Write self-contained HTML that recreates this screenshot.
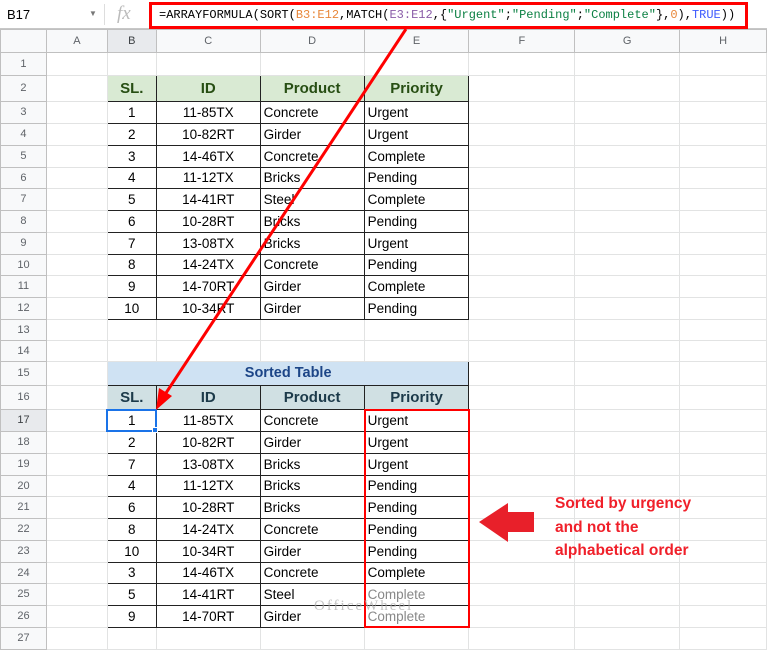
<!DOCTYPE html>
<html><head><meta charset="utf-8"><style>
*{margin:0;padding:0;box-sizing:border-box}
body{width:767px;height:646px;overflow:hidden;background:#fff;font-family:"Liberation Sans",Arial,sans-serif;position:relative}
#fb{position:absolute;left:0;top:0;width:767px;height:29px;border-bottom:1px solid #c7c7c7;background:#fff}
table{position:absolute;left:0;top:29px;border-collapse:collapse;table-layout:fixed}
td{border:1px solid #e2e3e3;font-size:13.5px;color:#000;white-space:nowrap;overflow:hidden;padding:0 3px;line-height:1}
td.h{background:#f8f9fa;color:#5f6368;font-size:11px;text-align:center;border-color:#c0c0c0}
td.hs{background:#e8eaed;color:#3c4043}
td.d{border:1px solid #222}
td.c{text-align:center}
td.gh{background:#d9ead3;color:#274e13;font-weight:bold;font-size:15px;text-align:center;border:1px solid #222}
td.bh{background:#d0e0e3;color:#1c3a4a;font-weight:bold;font-size:15px;text-align:center;border:1px solid #222}
td.bt{background:#cfe2f3;color:#1c4587;font-weight:bold;font-size:14.5px;text-align:center;border:1px solid #222}
</style></head><body>
<div id="fb">
 <div style="position:absolute;left:7px;top:7px;font-size:13px;color:#000">B17</div>
 <div style="position:absolute;left:89px;top:9px;font-size:8px;color:#777">▼</div>
 <div style="position:absolute;left:104px;top:4px;width:1px;height:21px;background:#ddd"></div>
 <div style="position:absolute;left:117px;top:3px;font-family:'Liberation Serif',serif;font-style:italic;font-size:19px;color:#bbb">fx</div>
 <div style="position:absolute;left:149px;top:2px;width:599px;height:27px;border:3px solid #f00"></div>
 <div style="position:absolute;left:159px;top:8px;font-family:'Liberation Mono',monospace;font-size:12px;color:#000">=ARRAYFORMULA(SORT(<span style="color:#e8873a">B3:E12</span>,MATCH(<span style="color:#8a5ca8">E3:E12</span>,{<span style="color:#0b8043">"Urgent"</span>;<span style="color:#0b8043">"Pending"</span>;<span style="color:#0b8043">"Complete"</span>},<span style="color:#e8873a">0</span>),<span style="color:#3d5afe">TRUE</span>))</div>
</div>
<table>
<colgroup><col style="width:46px"><col style="width:61px"><col style="width:49px"><col style="width:104px"><col style="width:104px"><col style="width:105px"><col style="width:106px"><col style="width:105px"><col style="width:87px"></colgroup>
<tr style="height:23px"><td class="h"></td><td class="h">A</td><td class="h hs">B</td><td class="h">C</td><td class="h">D</td><td class="h">E</td><td class="h">F</td><td class="h">G</td><td class="h">H</td></tr>
<tr style="height:23px"><td class="h">1</td><td></td><td></td><td></td><td></td><td></td><td></td><td></td><td></td></tr>
<tr style="height:26px"><td class="h">2</td><td></td><td class="gh">SL.</td><td class="gh">ID</td><td class="gh">Product</td><td class="gh">Priority</td><td></td><td></td><td></td></tr>
<tr style="height:22px"><td class="h">3</td><td></td><td class="d c">1</td><td class="d c">11-85TX</td><td class="d">Concrete</td><td class="d">Urgent</td><td></td><td></td><td></td></tr>
<tr style="height:22px"><td class="h">4</td><td></td><td class="d c">2</td><td class="d c">10-82RT</td><td class="d">Girder</td><td class="d">Urgent</td><td></td><td></td><td></td></tr>
<tr style="height:22px"><td class="h">5</td><td></td><td class="d c">3</td><td class="d c">14-46TX</td><td class="d">Concrete</td><td class="d">Complete</td><td></td><td></td><td></td></tr>
<tr style="height:21px"><td class="h">6</td><td></td><td class="d c">4</td><td class="d c">11-12TX</td><td class="d">Bricks</td><td class="d">Pending</td><td></td><td></td><td></td></tr>
<tr style="height:22px"><td class="h">7</td><td></td><td class="d c">5</td><td class="d c">14-41RT</td><td class="d">Steel</td><td class="d">Complete</td><td></td><td></td><td></td></tr>
<tr style="height:22px"><td class="h">8</td><td></td><td class="d c">6</td><td class="d c">10-28RT</td><td class="d">Bricks</td><td class="d">Pending</td><td></td><td></td><td></td></tr>
<tr style="height:22px"><td class="h">9</td><td></td><td class="d c">7</td><td class="d c">13-08TX</td><td class="d">Bricks</td><td class="d">Urgent</td><td></td><td></td><td></td></tr>
<tr style="height:21px"><td class="h">10</td><td></td><td class="d c">8</td><td class="d c">14-24TX</td><td class="d">Concrete</td><td class="d">Pending</td><td></td><td></td><td></td></tr>
<tr style="height:22px"><td class="h">11</td><td></td><td class="d c">9</td><td class="d c">14-70RT</td><td class="d">Girder</td><td class="d">Complete</td><td></td><td></td><td></td></tr>
<tr style="height:22px"><td class="h">12</td><td></td><td class="d c">10</td><td class="d c">10-34RT</td><td class="d">Girder</td><td class="d">Pending</td><td></td><td></td><td></td></tr>
<tr style="height:21px"><td class="h">13</td><td></td><td></td><td></td><td></td><td></td><td></td><td></td><td></td></tr>
<tr style="height:21px"><td class="h">14</td><td></td><td></td><td></td><td></td><td></td><td></td><td></td><td></td></tr>
<tr style="height:24px"><td class="h">15</td><td></td><td class="bt" colspan="4">Sorted Table</td><td></td><td></td><td></td></tr>
<tr style="height:24px"><td class="h">16</td><td></td><td class="bh">SL.</td><td class="bh">ID</td><td class="bh">Product</td><td class="bh">Priority</td><td></td><td></td><td></td></tr>
<tr style="height:22px"><td class="h hs">17</td><td></td><td class="d c">1</td><td class="d c">11-85TX</td><td class="d">Concrete</td><td class="d">Urgent</td><td></td><td></td><td></td></tr>
<tr style="height:22px"><td class="h">18</td><td></td><td class="d c">2</td><td class="d c">10-82RT</td><td class="d">Girder</td><td class="d">Urgent</td><td></td><td></td><td></td></tr>
<tr style="height:22px"><td class="h">19</td><td></td><td class="d c">7</td><td class="d c">13-08TX</td><td class="d">Bricks</td><td class="d">Urgent</td><td></td><td></td><td></td></tr>
<tr style="height:21px"><td class="h">20</td><td></td><td class="d c">4</td><td class="d c">11-12TX</td><td class="d">Bricks</td><td class="d">Pending</td><td></td><td></td><td></td></tr>
<tr style="height:22px"><td class="h">21</td><td></td><td class="d c">6</td><td class="d c">10-28RT</td><td class="d">Bricks</td><td class="d">Pending</td><td></td><td></td><td></td></tr>
<tr style="height:22px"><td class="h">22</td><td></td><td class="d c">8</td><td class="d c">14-24TX</td><td class="d">Concrete</td><td class="d">Pending</td><td></td><td></td><td></td></tr>
<tr style="height:22px"><td class="h">23</td><td></td><td class="d c">10</td><td class="d c">10-34RT</td><td class="d">Girder</td><td class="d">Pending</td><td></td><td></td><td></td></tr>
<tr style="height:21px"><td class="h">24</td><td></td><td class="d c">3</td><td class="d c">14-46TX</td><td class="d">Concrete</td><td class="d">Complete</td><td></td><td></td><td></td></tr>
<tr style="height:22px"><td class="h">25</td><td></td><td class="d c">5</td><td class="d c">14-41RT</td><td class="d">Steel</td><td class="d" style="color:#888">Complete</td><td></td><td></td><td></td></tr>
<tr style="height:22px"><td class="h">26</td><td></td><td class="d c">9</td><td class="d c">14-70RT</td><td class="d">Girder</td><td class="d" style="color:#888">Complete</td><td></td><td></td><td></td></tr>
<tr style="height:22px"><td class="h">27</td><td></td><td></td><td></td><td></td><td></td><td></td><td></td><td></td></tr>
</table>
<div style="position:absolute;left:106px;top:409px;width:51px;height:23px;border:2px solid #1a73e8"></div>
<div style="position:absolute;left:152px;top:427px;width:6px;height:6px;background:#1a73e8;border:1px solid #fff"></div>
<div style="position:absolute;left:364px;top:409px;width:106px;height:219px;border:2.5px solid #f00"></div>
<div style="position:absolute;left:314px;top:598px;font-family:'Liberation Serif',serif;font-size:15px;color:#aaa;letter-spacing:2px;opacity:.7">OfficeWheel</div>
<svg width="767" height="646" style="position:absolute;left:0;top:0" viewBox="0 0 767 646">
 <line x1="406" y1="29" x2="164" y2="396" stroke="#f00" stroke-width="3"/>
 <polygon points="156,410 159,388 172,396" fill="#f00"/>
 <polygon points="479,522 508,503 508,512 534,512 534,532 508,532 508,542" fill="#e8202a"/>
</svg>
<div style="position:absolute;left:555px;top:492px;font-size:15.5px;font-weight:bold;color:#f0202a;line-height:23.5px">Sorted by urgency<br>and not the<br>alphabetical order</div>
</body></html>
